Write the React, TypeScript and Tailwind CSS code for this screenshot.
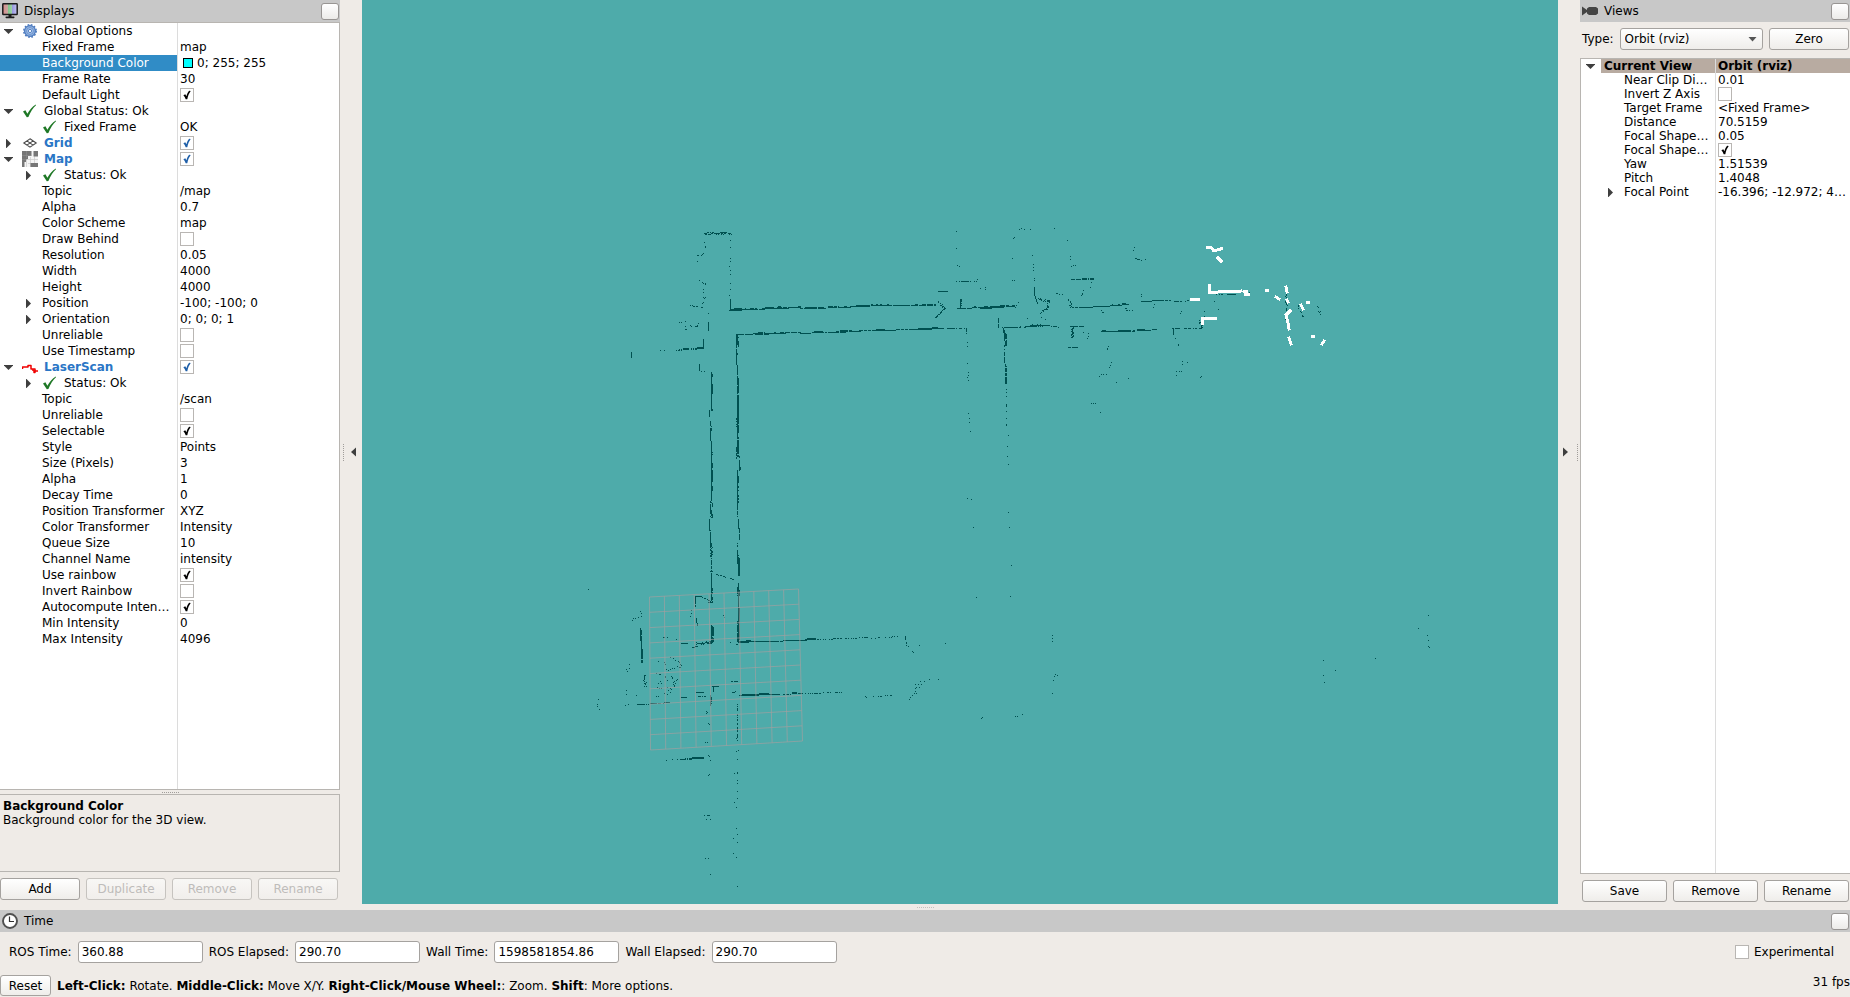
import { ReactNode } from "react";
import clsx from "clsx";

type Row = {
  name: string;
  value?: string;
  checked?: boolean;
  depth?: number;
  open?: boolean;
  icon?: ReactNode;
  display?: boolean;
  selected?: boolean;
  swatch?: boolean;
  header?: boolean;
};

/* ---------------------------------- icons --------------------------------- */

const MonitorIcon = () => (
  <svg width="16" height="16" viewBox="0 0 16 16">
    <defs>
      <linearGradient id="screen">
        <stop offset="0" stopColor="#d98a8a" />
        <stop offset="0.33" stopColor="#c9a6a0" />
        <stop offset="0.36" stopColor="#7fc487" />
        <stop offset="0.64" stopColor="#9fd0a8" />
        <stop offset="0.67" stopColor="#9a9ae0" />
        <stop offset="1" stopColor="#c4c4f2" />
      </linearGradient>
    </defs>
    <rect x="0.8" y="0.8" width="14.4" height="10.8" rx="0.6" fill="url(#screen)" stroke="#1c1c1c" strokeWidth="1.5" />
    <path d="M6.5 12h3v1.6h2.3c1 0 1 1.6 0 1.6H4.2c-1 0-1-1.6 0-1.6h2.3z" fill="#1c1c1c" />
  </svg>
);

const GearIcon = () => (
  <svg width="16" height="16" viewBox="0 0 16 16">
    <circle cx="8" cy="8" r="5.4" fill="#8fb2e0" stroke="#4a78bd" strokeWidth="1.2" />
    <circle cx="8" cy="8" r="6.2" fill="none" stroke="#4a78bd" strokeWidth="1.5" strokeDasharray="1.7 1.55" />
    <circle cx="8" cy="8" r="3.4" fill="#a9c4ea" stroke="#5e88c8" strokeWidth="0.8" />
    <circle cx="8" cy="8" r="1.6" fill="#fff" stroke="#4a78bd" strokeWidth="0.9" />
  </svg>
);

const TickIcon = () => (
  <svg width="16" height="16" viewBox="0 0 16 16">
    <path d="M1 8.600 3.400 7.200 5.400 10.800C7.600 6.800 10.200 3.800 13.800 1.600L14 2.200C11 5 8.400 8.800 6.400 14L4.800 14.200z" fill="#1f7826" />
  </svg>
);

const GridIcon = () => (
  <svg width="16" height="16" viewBox="0 0 16 16">
    <path
      d="M8 3.800 14.200 8 8 12.200 1.800 8zM4.900 5.900l6.200 4.200M11.100 5.900l-6.200 4.200"
      fill="none"
      stroke="#4a4a4a"
      strokeWidth="1.1"
    />
  </svg>
);

const MapIcon = () => (
  <svg width="16" height="16" viewBox="0 0 16 16">
    <path d="M0 0h16v16H0z" fill="#f4f4f4" />
    <path d="M4.500 6v10M8.500 6v10M12.500 5v7M4 8.500h12M6 12.500h10" stroke="#c9c9c9" strokeWidth="0.7" />
    <path d="M0 0h9.500v5H6v3H4v3H2.500v5H0zM11.500 0H16v5.500h-4.500zM8.500 12H16v4H8.500z" fill="#767676" />
    <path d="M0 4.500h9M0 8.500h5M4.500 0v7" stroke="#959595" strokeWidth="0.5" />
  </svg>
);

const LaserIcon = () => (
  <svg width="16" height="16" viewBox="0 0 16 16">
    <path d="M0.500 10V8H6V6.500H9V10H12M11 12V10H13V13.500H12V12H16" fill="none" stroke="#f00000" strokeWidth="1.500" strokeLinejoin="round" />
  </svg>
);

const CameraIcon = () => (
  <svg width="17" height="10" viewBox="0 0 17 10">
    <path d="M0 0.500 5 4V2.500L7 1h7l2 1.500v5L14 9H7L5 7.500V6L0 9.500z" fill="#444" />
  </svg>
);

const ClockIcon = () => (
  <svg width="16" height="16" viewBox="0 0 16 16">
    <circle cx="8" cy="8" r="7" fill="#fff" stroke="#505050" strokeWidth="1.900" />
    <path d="M7.500 3.500v5H12" fill="none" stroke="#303030" strokeWidth="1.200" />
  </svg>
);

const Arrow = ({ open }: { open: boolean }) => (
  <svg width="9" height="9" viewBox="0 0 9 9" fill="#3f3f3f">
    {open ? <path d="M0 2h9v0.500L4.500 7 0 2.500z" /> : <path d="M2 0h0.500L7 4.500 2.500 9H2z" />}
  </svg>
);

/* -------------------------------- data rows ------------------------------- */

const DISPLAY_ROWS: Row[] = [
  { name: "Global Options", open: true, icon: <GearIcon /> },
  { name: "Fixed Frame", depth: 1, value: "map" },
  { name: "Background Color", depth: 1, value: "0; 255; 255", selected: true, swatch: true },
  { name: "Frame Rate", depth: 1, value: "30" },
  { name: "Default Light", depth: 1, checked: true },
  { name: "Global Status: Ok", open: true, icon: <TickIcon /> },
  { name: "Fixed Frame", depth: 1, value: "OK", icon: <TickIcon /> },
  { name: "Grid", open: false, icon: <GridIcon />, display: true, checked: true },
  { name: "Map", open: true, icon: <MapIcon />, display: true, checked: true },
  { name: "Status: Ok", depth: 1, open: false, icon: <TickIcon /> },
  { name: "Topic", depth: 1, value: "/map" },
  { name: "Alpha", depth: 1, value: "0.7" },
  { name: "Color Scheme", depth: 1, value: "map" },
  { name: "Draw Behind", depth: 1, checked: false },
  { name: "Resolution", depth: 1, value: "0.05" },
  { name: "Width", depth: 1, value: "4000" },
  { name: "Height", depth: 1, value: "4000" },
  { name: "Position", depth: 1, value: "-100; -100; 0", open: false },
  { name: "Orientation", depth: 1, value: "0; 0; 0; 1", open: false },
  { name: "Unreliable", depth: 1, checked: false },
  { name: "Use Timestamp", depth: 1, checked: false },
  { name: "LaserScan", open: true, icon: <LaserIcon />, display: true, checked: true },
  { name: "Status: Ok", depth: 1, open: false, icon: <TickIcon /> },
  { name: "Topic", depth: 1, value: "/scan" },
  { name: "Unreliable", depth: 1, checked: false },
  { name: "Selectable", depth: 1, checked: true },
  { name: "Style", depth: 1, value: "Points" },
  { name: "Size (Pixels)", depth: 1, value: "3" },
  { name: "Alpha", depth: 1, value: "1" },
  { name: "Decay Time", depth: 1, value: "0" },
  { name: "Position Transformer", depth: 1, value: "XYZ" },
  { name: "Color Transformer", depth: 1, value: "Intensity" },
  { name: "Queue Size", depth: 1, value: "10" },
  { name: "Channel Name", depth: 1, value: "intensity" },
  { name: "Use rainbow", depth: 1, checked: true },
  { name: "Invert Rainbow", depth: 1, checked: false },
  { name: "Autocompute Inten…", depth: 1, checked: true },
  { name: "Min Intensity", depth: 1, value: "0" },
  { name: "Max Intensity", depth: 1, value: "4096" },
];

const VIEW_ROWS: Row[] = [
  { name: "Current View", value: "Orbit (rviz)", open: true, header: true },
  { name: "Near Clip Di…", depth: 1, value: "0.01" },
  { name: "Invert Z Axis", depth: 1, checked: false },
  { name: "Target Frame", depth: 1, value: "<Fixed Frame>" },
  { name: "Distance", depth: 1, value: "70.5159" },
  { name: "Focal Shape…", depth: 1, value: "0.05" },
  { name: "Focal Shape…", depth: 1, checked: true },
  { name: "Yaw", depth: 1, value: "1.51539" },
  { name: "Pitch", depth: 1, value: "1.4048" },
  { name: "Focal Point", depth: 1, value: "-16.396; -12.972; 4…", open: false },
];

const TIMES = [
  { id: "ros-time", label: "ROS Time:", value: "360.88" },
  { id: "ros-elapsed", label: "ROS Elapsed:", value: "290.70" },
  { id: "wall-time", label: "Wall Time:", value: "1598581854.86" },
  { id: "wall-elapsed", label: "Wall Elapsed:", value: "290.70" },
];

/* -------------------------------- map data -------------------------------- */

// x1, y1, x2, y2, density, spread
const WALLS: number[][] = [
  [704, 233, 731, 233, 0.8, 1], [689, 305, 702, 307, 0.6, 0], [730, 299, 730, 309, 1, 0],
  [708, 322, 708, 330, 1, 0], [703, 339, 703, 348, 1, 0], [676, 350, 703, 348, 0.85, 0],
  [631, 352, 631, 357, 1, 0], [699, 364, 699, 370, 1, 0],
  [729, 310, 753, 309, 1, 0], [731, 309, 745, 309, 1, 0], [753, 309, 800, 307, 0.9, 0],
  [765, 308, 790, 307, 0.9, 0], [800, 308, 850, 307, 0.9, 0], [850, 306, 890, 305, 0.9, 0],
  [873, 305, 900, 305, 0.9, 0], [900, 305, 935, 305, 0.85, 0], [938, 301, 944, 308, 0.9, 1],
  [944, 308, 936, 317, 0.9, 1], [938, 291, 947, 291, 1, 0],
  [736, 334, 800, 332, 0.9, 0], [755, 334, 785, 333, 0.8, 0], [800, 333, 870, 330, 0.9, 0],
  [830, 332, 860, 331, 0.6, 0], [870, 330, 920, 329, 0.9, 0], [920, 329, 942, 328, 1, 0],
  [928, 328, 940, 328, 0.8, 0], [942, 328, 966, 328, 0.7, 0], [966, 328, 966, 335, 0.8, 0],
  [956, 281, 976, 281, 0.7, 0],
  [711, 372, 711, 410, 1, 0], [712, 384, 712, 393, 0.7, 0], [709, 410, 709, 416, 1, 0],
  [710, 421, 711, 430, 0.9, 0], [710, 428, 710, 440, 1, 0], [711, 441, 711, 500, 1, 0],
  [712, 463, 712, 467, 1, 0], [711, 501, 711, 517, 0.9, 1], [709, 519, 709, 530, 1, 0],
  [710, 530, 710, 546, 0.9, 0], [711, 547, 711, 556, 0.9, 1], [711, 558, 711, 600, 0.9, 0],
  [712, 588, 712, 602, 0.8, 0], [708, 602, 712, 602, 1, 0], [711, 625, 711, 643, 1, 0], [712, 626, 712, 642, 0.9, 0],
  [736, 334, 737, 395, 0.85, 0], [738, 337, 738, 346, 0.7, 0], [738, 378, 738, 392, 0.9, 0],
  [737, 395, 737, 438, 1, 0], [736, 418, 736, 428, 0.4, 0], [737, 440, 737, 456, 0.9, 0],
  [736, 447, 736, 458, 0.7, 0], [739, 456, 739, 470, 0.9, 0], [737, 470, 737, 509, 1, 0],
  [738, 486, 738, 502, 0.5, 0], [737, 510, 737, 518, 0.4, 0], [738, 519, 738, 528, 1, 0],
  [739, 528, 739, 539, 0.9, 0], [737, 540, 737, 552, 0.4, 0], [737, 553, 738, 575, 1, 0],
  [738, 554, 738, 575, 0.8, 0], [738, 583, 738, 642, 1, 0], [737, 586, 737, 595, 0.8, 0], [737, 620, 737, 641, 0.9, 0],
  [960, 299, 960, 308, 1, 0], [961, 299, 961, 305, 0.8, 0], [957, 308, 1014, 306, 0.95, 0],
  [980, 308, 1003, 307, 1, 0], [1034, 287, 1034, 294, 1, 0], [1034, 294, 1037, 303, 1, 0],
  [1036, 299, 1049, 300, 0.5, 1], [1048, 301, 1046, 309, 0.7, 1], [1046, 308, 1040, 313, 0.7, 1],
  [1056, 293, 1062, 294, 0.7, 0], [1069, 279, 1093, 279, 0.8, 0], [1068, 299, 1071, 307, 0.9, 1],
  [1071, 307, 1081, 307, 0.8, 0], [1081, 307, 1103, 306, 1, 0], [1103, 306, 1128, 304, 0.9, 0],
  [1124, 308, 1134, 311, 0.5, 1], [1135, 258, 1139, 259, 1, 0], [1141, 301, 1162, 300, 1, 0],
  [1162, 300, 1172, 300, 0.5, 0], [1174, 301, 1198, 300, 0.8, 0], [998, 318, 998, 327, 0.7, 0],
  [1001, 327, 1025, 327, 0.8, 0], [1025, 326, 1048, 325, 1, 0], [1030, 325, 1042, 325, 0.8, 1],
  [1048, 325, 1060, 327, 0.7, 0], [1003, 328, 1005, 345, 1, 0], [1006, 333, 1006, 344, 0.9, 0],
  [1004, 345, 1005, 383, 0.8, 0], [1070, 326, 1083, 326, 0.8, 0], [1072, 327, 1072, 337, 0.9, 1],
  [1068, 347, 1078, 347, 0.8, 0], [1101, 331, 1130, 331, 1, 0], [1130, 331, 1157, 329, 0.8, 0],
  [1172, 328, 1180, 328, 0.9, 0], [1173, 328, 1173, 335, 0.9, 0], [1184, 328, 1200, 328, 0.6, 0],
  [1200, 320, 1201, 328, 1, 1], [1216, 294, 1235, 294, 0.5, 0], [1285, 288, 1286, 320, 0.35, 1],
  [1298, 305, 1302, 316, 0.4, 1], [1318, 304, 1319, 315, 0.4, 1],
  [640, 628, 641, 653, 1, 0], [641, 630, 641, 662, 0.8, 0], [644, 675, 645, 687, 0.7, 1],
  [716, 574, 733, 579, 0.6, 0], [695, 596, 701, 596, 0.9, 0], [701, 596, 710, 601, 0.8, 0],
  [695, 597, 695, 606, 0.9, 0], [696, 618, 697, 627, 0.8, 0], [696, 643, 711, 642, 1, 1],
  [692, 647, 697, 646, 1, 0], [681, 643, 687, 643, 0.8, 0], [729, 642, 737, 644, 0.6, 0],
  [738, 641, 770, 641, 1, 0], [738, 642, 758, 641, 1, 0], [770, 641, 818, 639, 0.9, 0],
  [820, 639, 870, 637, 0.5, 0], [870, 638, 898, 636, 0.3, 0], [905, 636, 906, 645, 0.6, 0],
  [739, 695, 778, 694, 1, 0], [755, 694, 770, 694, 0.9, 0], [778, 694, 802, 693, 0.8, 0],
  [802, 693, 842, 692, 0.5, 0], [870, 696, 892, 695, 0.4, 0], [916, 697, 916, 697, 0, 0],
  [712, 686, 718, 686, 1, 0], [713, 687, 713, 691, 1, 0], [696, 692, 703, 692, 1, 0],
  [698, 696, 706, 696, 0.7, 0], [731, 681, 737, 681, 0.8, 0], [732, 692, 736, 691, 0.9, 0],
  [710, 695, 710, 705, 1, 0], [711, 697, 711, 704, 0.8, 0], [681, 697, 687, 697, 0.7, 0],
  [637, 704, 660, 703, 0.7, 0], [660, 703, 672, 701, 0.6, 0], [737, 703, 737, 740, 0.6, 0],
  [705, 742, 711, 742, 0.7, 0], [680, 759, 703, 758, 0.9, 0],
];

const DOTS =
  "704,242 705,246 705,247 703,253 702,254 701,255 697,255 698,255 697,261 699,280 702,282 703,283 705,283 705,284 " +
  "703,289 703,292 703,297 704,298 705,297 703,302 702,303 730,240 730,247 730,258 730,261 729,266 730,270 730,274 " +
  "730,283 730,289 729,295 679,322 681,322 685,321 685,326 685,329 686,329 690,325 691,326 695,326 697,325 698,323 " +
  "696,326 697,326 708,313 660,350 664,350 701,371 704,371 967,342 967,346 967,363 968,372 968,375 967,377 968,380 " +
  "968,413 969,418 969,422 970,431 956,231 956,248 957,265 959,266 977,279 980,288 985,287 985,289 1016,305 " +
  "1018,302 1015,307 1019,229 1021,228 1024,229 1030,229 1054,228 1013,238 1014,237 1067,240 1012,258 1032,255 " +
  "1033,264 1033,267 1033,270 1012,280 1014,280 1034,278 1034,280 1070,256 1070,259 1071,266 1073,265 1075,265 " +
  "1091,282 1090,287 1083,290 1082,293 1082,294 1081,295 1101,310 1102,312 1103,312 1133,250 1134,247 1141,260 " +
  "1145,259 1141,294 1141,296 1154,304 1153,307 1181,311 1180,313 1083,332 1088,333 1088,336 1087,338 1107,348 " +
  "1107,349 1108,346 1111,362 1110,365 1109,367 1101,374 1103,374 1106,374 1099,376 1116,382 1128,378 1091,403 " +
  "1093,403 1095,403 1100,412 1175,338 1178,344 1178,345 1182,361 1182,364 1187,362 1176,371 1179,371 1181,371 " +
  "1176,375 1200,377 1201,376 1249,292 1214,301 1218,309 1204,311 1204,316 1027,318 1041,317 1045,319 1006,389 " +
  "1006,392 1006,396 1006,404 1006,405 1006,406 1006,411 1006,418 1006,424 1006,425 1008,435 1007,446 1007,456 " +
  "1008,464 588,589 640,611 641,613 641,616 632,620 633,618 635,618 638,617 629,664 626,669 627,671 629,668 " +
  "626,690 626,694 636,695 625,705 628,704 598,699 597,704 597,706 599,709 710,571 712,571 663,637 664,637 667,637 " +
  "676,639 691,610 691,613 690,616 723,615 724,617 908,646 912,651 913,652 919,645 945,643 865,696 866,697 " +
  "909,699 910,697 912,695 914,693 915,691 916,693 915,688 915,684 916,687 918,684 919,687 920,681 921,684 924,681 " +
  "929,679 938,679 736,738 736,751 738,750 737,759 737,772 737,773 734,773 737,780 737,783 737,791 737,798 734,802 " +
  "736,807 736,828 737,834 733,838 737,842 733,853 736,857 737,886 706,711 707,712 706,713 708,723 709,724 " +
  "708,755 709,756 710,760 666,760 672,759 677,759 708,775 709,774 704,815 707,815 708,815 709,815 706,819 710,819 " +
  "705,858 708,858 710,874 967,498 971,499 973,527 1008,512 1009,527 1011,565 1010,596 976,597 1052,635 1052,638 " +
  "1052,641 1055,674 1054,676 1057,675 1053,680 1052,693 981,718 982,717 1015,716 1017,716 1022,714 1323,660 " +
  "1335,670 1323,675 1324,682 1375,658 1418,628 1427,635 1428,615 1428,640 1428,646 1429,647 " +
  // clutter inside the reference grid
  "658,661 659,674 656,673 660,674 664,662 665,664 666,669 668,670 670,669 672,668 674,668 675,660 673,658 670,657 " +
  "678,661 679,662 680,664 681,665 679,667 680,667 677,666 665,677 667,680 671,676 672,678 674,681 677,679 675,683 " +
  "673,684 674,686 670,688 667,687 668,690 671,689 660,681 658,683 661,688 657,687 656,696 658,696 661,683 664,693 " +
  "667,694 670,692 676,680 674,685 665,676 673,682 672,677 659,688";

const SCAN =
  "M1207 247h4l2 3 4 0 4-1v-1M1218 258l3 3M1209 285v7h9l23-1M1244 291h2M1245 294h3M1191 299h7" +
  "M1202 323v-5h13M1266 290h1M1276 297l3 2M1286 287l1 5M1287 300l1 2M1290 311l-4 4 2 8 1 6M1289 338l2 6" +
  "M1307 302h1M1301 305l2 4M1312 336h1M1322 344l2-3";

// occupied cells of the map as 1x1 squares, worn walls come from a fixed seed
function occupiedCells() {
  let seed = 7;
  const rand = () => {
    seed = (seed * 16807) % 2147483647;
    return seed / 2147483647;
  };
  const cells = new Set<string>(DOTS.split(" "));
  WALLS.forEach(([x1, y1, x2, y2, density, spread]) => {
    const steps = Math.max(Math.abs(x2 - x1), Math.abs(y2 - y1));
    const vertical = Math.abs(y2 - y1) > Math.abs(x2 - x1);
    let thick = false;
    for (let i = 0; i <= steps; i++) {
      const x = Math.round(x1 + ((x2 - x1) * i) / steps);
      const y = Math.round(y1 + ((y2 - y1) * i) / steps);
      if (rand() < 0.2) thick = rand() < 0.4;
      const reps = spread ? 2 : 1;
      for (let k = 0; k < reps; k++) {
        const off = spread ? Math.round((rand() * 2 - 1) * spread) : 0;
        if (rand() >= density) continue;
        cells.add(vertical ? `${x + off},${y}` : `${x},${y + off}`);
        if (thick && steps > 12 && density > 0.7) cells.add(vertical ? `${x + 1},${y}` : `${x},${y - 1}`);
      }
    }
  });
  return [...cells].map((c) => `M${c.replace(",", " ")}h1v1h-1z`).join("");
}

const CELLS = occupiedCells();

function gridLines() {
  const tl = [649.5, 597], tr = [798.5, 589], bl = [650.5, 750], br = [802.5, 741];
  const mix = (a: number[], b: number[], t: number) =>
    `${(a[0] + (b[0] - a[0]) * t).toFixed(1)} ${(a[1] + (b[1] - a[1]) * t).toFixed(1)}`;
  let d = "";
  for (let i = 0; i <= 10; i++) {
    const t = i / 10;
    d += `M${mix(tl, tr, t)}L${mix(bl, br, t)}M${mix(tl, bl, t)}L${mix(tr, br, t)}`;
  }
  return d;
}

const GRID = gridLines();

/* ------------------------------- components ------------------------------- */

const buttonClass =
  "h-[22px] rounded-[3px] border border-[#a5a29f] bg-linear-to-b from-white to-[#efedea] text-center leading-5 disabled:border-[#c6c3bf] disabled:from-[#f8f7f5] disabled:to-[#f1eeeb] disabled:text-[#bebcba]";

function CheckBox({ id, checked, blue }: { id: string; checked?: boolean; blue?: boolean }) {
  return (
    <span className="grid size-[14px] shrink-0">
      <input
        id={id}
        type="checkbox"
        defaultChecked={checked}
        className="peer size-[14px] appearance-none border border-[#b9b6b3] bg-white [grid-area:1/1]"
      />
      <svg
        viewBox="0 0 14 14"
        className={clsx(
          "pointer-events-none size-[14px] opacity-0 [grid-area:1/1] peer-checked:opacity-100",
          blue ? "text-[#1f5fa8]" : "text-black"
        )}
      >
        <path d="M3.400 7.200 5.300 6.300 6.400 8.300C7 6 8 4 9.200 2.800L10.700 3C8.900 5.500 7.900 8 7.300 11.200H5.700C5.100 9.700 4.400 8.300 3.400 7.200z" fill="currentColor" />
      </svg>
    </span>
  );
}

function TitleBar({ icon, title }: { icon: ReactNode; title: string }) {
  return (
    <div className="flex h-[22px] shrink-0 items-center gap-[6px] bg-[#c8c8c8] pr-px pl-[2px]">
      <span className="grid w-4 place-items-center">{icon}</span>
      <h2 className="flex-1">{title}</h2>
      <button
        aria-label={`Close ${title}`}
        className="h-[17px] w-[18px] rounded-[3px] border border-[#989593] bg-linear-to-b from-white to-[#ecebe9]"
      />
    </div>
  );
}

function PropertyTable({ id, rows, compact }: { id: string; rows: Row[]; compact?: boolean }) {
  const nameWidth = compact ? "w-[135px]" : "w-[178px]";
  return (
    <div className="flex min-h-0 flex-1 flex-col overflow-hidden bg-white">
      <table className="w-full table-fixed border-separate border-spacing-0">
        <colgroup>
          <col className={nameWidth} />
          <col />
        </colgroup>
        <tbody>
          {rows.map((row, i) => {
            const isCheck = row.checked !== undefined;
            const boxId = `${id}-${i}`;
            return (
              <tr key={boxId} className={clsx(compact ? "h-[14px]" : "h-4", row.header && "font-bold")}>
                <td className="border-r border-[#dcdcdc] p-0">
                  <div
                    className={clsx(
                      "flex items-center whitespace-nowrap",
                      compact ? "h-[14px]" : "h-4",
                      row.selected && "bg-[#308cc6] text-white"
                    )}
                  >
                    <span className={clsx("flex h-full shrink-0 items-center", row.depth ? "w-10 pl-5" : "w-5")}>
                      {row.open !== undefined && (
                        <button
                          aria-label={`Toggle ${row.name}`}
                          aria-expanded={row.open}
                          className={compact ? "ml-[5px]" : "ml-1"}
                        >
                          <Arrow open={row.open} />
                        </button>
                      )}
                    </span>
                    <span
                      className={clsx(
                        "flex h-full flex-1 items-center gap-[6px]",
                        compact ? "pl-[3px]" : "pl-[2px]",
                        row.header && "bg-[#b8aba1]",
                        row.display && "font-bold text-[#2a76c6]"
                      )}
                    >
                      {row.icon}
                      {isCheck ? <label htmlFor={boxId}>{row.name}</label> : row.name}
                    </span>
                  </div>
                </td>
                <td className={clsx("p-0", row.header && "bg-[#b8aba1]")}>
                  <div className={clsx("flex items-center pl-[2px] whitespace-nowrap", compact ? "h-[14px]" : "h-4")}>
                    {row.swatch && <span className="mr-1 ml-[3px] size-[10px] border border-black bg-[#00ffff]" />}
                    {isCheck ? <CheckBox id={boxId} checked={row.checked} blue={row.display} /> : row.value}
                  </div>
                </td>
              </tr>
            );
          })}
        </tbody>
      </table>
      <div className={clsx("flex-1 border-r border-[#dcdcdc]", nameWidth)} />
    </div>
  );
}

function Splitter({ side }: { side: "left" | "right" }) {
  return (
    <div
      className={clsx(
        "flex w-[22px] shrink-0 items-center",
        side === "left" ? "gap-[7px] pl-[3px]" : "flex-row-reverse gap-[9px] pr-[2px]"
      )}
    >
      <span className="h-[17px] border-l border-dotted border-[#a09d9a]" />
      <button aria-label={`Collapse ${side} panel`}>
        <svg width="6" height="10" viewBox="0 0 6 10" fill="#3f3f3f">
          {side === "left" ? <path d="M5 0.500v9L0 5z" /> : <path d="M1 0.500v9L6 5z" />}
        </svg>
      </button>
    </div>
  );
}

export default function App() {
  return (
    <div className="flex h-screen flex-col overflow-hidden bg-[#efebe7] font-['DejaVu_Sans',sans-serif] text-[12px] leading-[14px] text-black">
      <div className="flex min-h-0 flex-1">
        {/* Displays */}
        <aside className="flex w-[340px] shrink-0 flex-col pb-1">
          <TitleBar icon={<MonitorIcon />} title="Displays" />
          <div className="flex min-h-0 flex-1 flex-col border-y border-r border-[#b8b5b1]">
            <PropertyTable id="display" rows={DISPLAY_ROWS} />
          </div>
          <div className="flex h-1 shrink-0 items-center justify-center">
            <span className="w-[17px] border-t border-dotted border-[#a09d9a]" />
          </div>
          <section className="h-[78px] shrink-0 border-y border-r border-[#b8b5b1] py-1 pl-[3px]">
            <h3 className="font-bold">Background Color</h3>
            <p>Background color for the 3D view.</p>
          </section>
          <div className="mt-[6px] grid grid-cols-4 gap-[6px] pr-[2px]">
            <button className={buttonClass}>Add</button>
            <button className={buttonClass} disabled>Duplicate</button>
            <button className={buttonClass} disabled>Remove</button>
            <button className={buttonClass} disabled>Rename</button>
          </div>
        </aside>

        <Splitter side="left" />

        {/* 3D view */}
        <main className="min-w-0 flex-1 bg-[#4eabaa]">
          <svg
            className="size-full"
            viewBox="362 0 1196 904"
            preserveAspectRatio="xMidYMid slice"
            role="img"
            aria-label="Occupancy map with laser scan"
          >
            <path d={CELLS} fill="#005050" shapeRendering="crispEdges" />
            <path d={GRID} fill="none" stroke="#a0a0a0" strokeOpacity="0.7" />
            <path d={SCAN} fill="none" stroke="#fff" strokeWidth="3" strokeLinecap="square" shapeRendering="crispEdges" />
          </svg>
        </main>

        <Splitter side="right" />

        {/* Views */}
        <aside className="flex w-[270px] shrink-0 flex-col pb-[2px]">
          <TitleBar icon={<CameraIcon />} title="Views" />
          <div className="my-[6px] flex h-[22px] shrink-0 items-center gap-[6px] pr-px pl-[2px]">
            <label htmlFor="view-type">Type:</label>
            <div className="grid flex-1 items-center">
              <select
                id="view-type"
                className="h-[22px] w-full appearance-none rounded-[3px] border border-[#a5a29f] bg-linear-to-b from-white to-[#efedea] pl-1 [grid-area:1/1]"
              >
                <option>Orbit (rviz)</option>
              </select>
              <svg width="9" height="5" viewBox="0 0 9 5" className="pointer-events-none mr-[6px] justify-self-end [grid-area:1/1]">
                <path d="M0.500 0h8L4.500 4.500z" fill="#555" />
              </svg>
            </div>
            <button className={clsx(buttonClass, "w-20")}>Zero</button>
          </div>
          <div className="mt-[2px] flex min-h-0 flex-1 flex-col border-y border-l border-[#b8b5b1]">
            <PropertyTable id="view" rows={VIEW_ROWS} compact />
          </div>
          <div className="mt-[6px] grid grid-cols-3 gap-[6px] pr-px pl-[2px]">
            <button className={buttonClass}>Save</button>
            <button className={buttonClass}>Remove</button>
            <button className={buttonClass}>Rename</button>
          </div>
        </aside>
      </div>

      <div className="flex h-[6px] shrink-0 items-center justify-center">
        <span className="w-[17px] border-t border-dotted border-[#c4c1bd]" />
      </div>

      {/* Time */}
      <TitleBar icon={<ClockIcon />} title="Time" />
      <div className="flex shrink-0 items-center gap-[6px] py-[9px] pr-4 pl-[9px]">
        {TIMES.map((t) => (
          <div key={t.id} className="flex items-center gap-[6px]">
            <label htmlFor={t.id}>{t.label}</label>
            <input
              id={t.id}
              defaultValue={t.value}
              className="h-[22px] w-[125px] rounded-[3px] border border-[#a5a29f] bg-white px-[3px]"
            />
          </div>
        ))}
        <div className="ml-auto flex items-center gap-[5px]">
          <CheckBox id="experimental" />
          <label htmlFor="experimental">Experimental</label>
        </div>
      </div>
      <footer className="flex shrink-0 items-center gap-[6px] pt-[3px] pb-px">
        <button className="h-[21px] w-[51px] rounded-[3px] border border-[#a5a29f] bg-linear-to-b from-white to-[#efedea]">Reset</button>
        <p className="flex-1">
          <b>Left-Click:</b> Rotate. <b>Middle-Click:</b> Move X/Y. <b>Right-Click/Mouse Wheel:</b>: Zoom. <b>Shift</b>: More options.
        </p>
        <span className="self-start">31 fps</span>
      </footer>
    </div>
  );
}
